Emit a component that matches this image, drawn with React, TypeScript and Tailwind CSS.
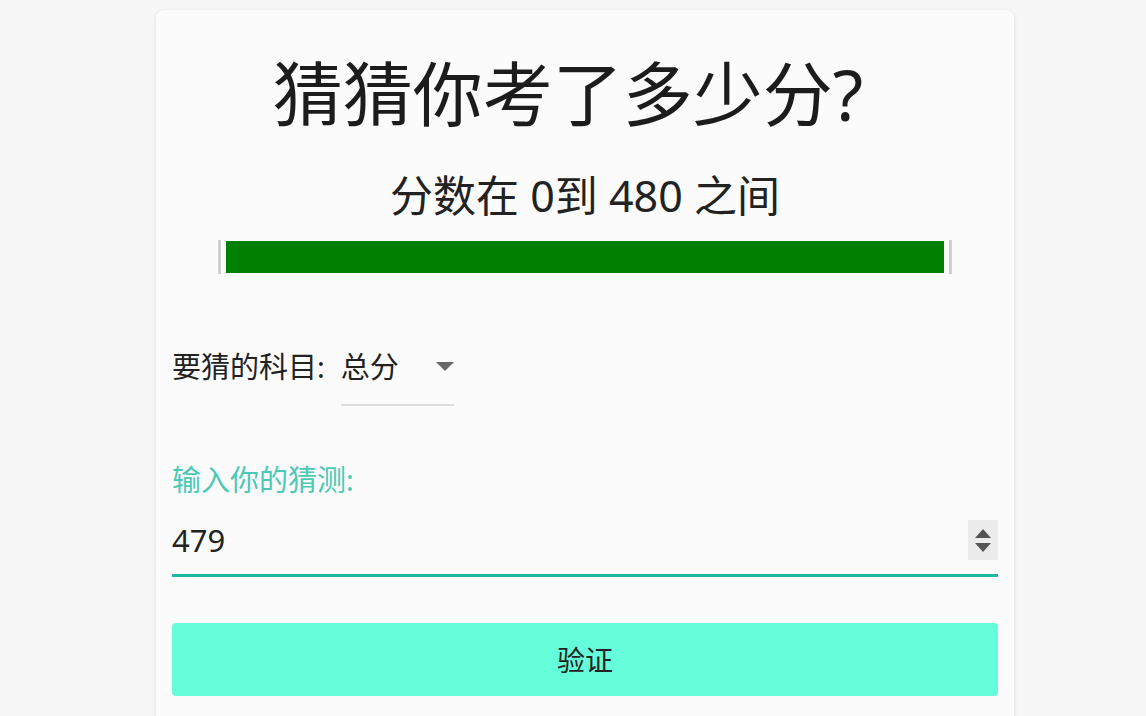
import { useState } from 'react';

const font = { fontFamily: '"Noto Sans", "Noto Sans CJK SC", sans-serif' };

export default function App() {
  const [guess, setGuess] = useState('479');
  const max = 480;

  return (
    <div className="min-h-[716px] bg-[#f7f7f7] pt-[10px]" style={font}>
      <div className="ml-[156px] w-[858px] min-h-[720px] rounded-lg bg-[#fbfbfb] shadow-[0_1px_4px_rgba(0,0,0,0.12)] px-4 pt-[34px]">
        {/* Header */}
        <h1 className="text-center text-[70px] leading-[100px] text-[#1c1c1c] pr-[34px]">猜猜你考了多少分?</h1>
        <p className="mt-[22px] text-center text-[43px] leading-[60px] text-[#222]">分数在 0到 {max} 之间</p>

        {/* Progress */}
        <div className="mt-[14px] mx-[46px] flex h-[34px] items-stretch">
          <div className="w-[3px] bg-[#cfcfcf]" />
          <div className="flex-1 px-[5px] py-[1px]">
            <div className="h-full bg-[#008000]" style={{ width: '100%' }} />
          </div>
          <div className="w-[3px] bg-[#cfcfcf]" />
        </div>

        {/* Subject select */}
        <div className="mt-[70px] flex items-start text-[29px] text-[#222]">
          <span className="leading-[46px]">要猜的科目:</span>
          <div className="ml-[16px] flex w-[113px] h-[62px] flex-col border-b-2 border-[#dedede]">
            <div className="flex h-[46px] items-center justify-between">
              <span className="leading-[46px]">总分</span>
              <svg width="18" height="10" viewBox="0 0 18 10">
                <path d="M0 0 L18 0 L9 9 Z" fill="#666" />
              </svg>
            </div>
          </div>
        </div>

        {/* Guess input */}
        <div className="mt-[54px]">
          <label className="block text-[29px] leading-[40px] text-[#4cc9b4]">输入你的猜测:</label>
          <div className="mt-[20px] flex items-center border-b-[3px] border-[#1fb89e] pb-[14px]">
            <input
              autoFocus
              value={guess}
              onChange={e => setGuess(e.target.value)}
              className="flex-1 bg-transparent text-[31px] leading-[40px] text-[#222] caret-[#111] outline-none"
              style={font}
            />
            <div className="flex h-[40px] w-[30px] flex-col items-center justify-center gap-[5px] bg-[#ececec]">
              <svg width="16" height="9" viewBox="0 0 16 9">
                <path d="M8 0 L16 9 L0 9 Z" fill="#555" />
              </svg>
              <svg width="16" height="9" viewBox="0 0 16 9">
                <path d="M0 0 L16 0 L8 9 Z" fill="#555" />
              </svg>
            </div>
          </div>
        </div>

        {/* Submit */}
        <button className="mt-[46px] flex h-[73px] w-full items-center justify-center rounded-[4px] bg-[#64ffda] text-[28px] text-[#222]" style={font}>
          验证
        </button>
      </div>
    </div>
  );
}
